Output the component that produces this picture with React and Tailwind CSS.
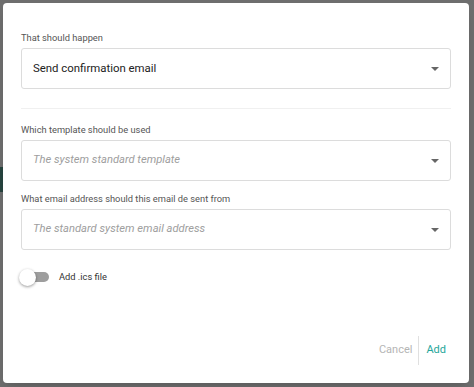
import { useState } from "react";

function Caret() {
  return (
    <svg width="8" height="4" viewBox="0 0 8 4" className="shrink-0">
      <path d="M0 0 L8 0 L4 4 Z" fill="#666" />
    </svg>
  );
}

function SelectBox({ value, placeholder }) {
  return (
    <div className="flex h-[41px] items-center justify-between rounded-[3px] border border-[#dcdcdc] pl-[11px] pr-[11px]">
      {value ? (
        <span className="text-[11.4px] text-[#222]">{value}</span>
      ) : (
        <span className="text-[11.2px] italic text-[#9e9e9e]">{placeholder}</span>
      )}
      <Caret />
    </div>
  );
}

function Field({ label, children }) {
  return (
    <div className="flex flex-col">
      <label className="mb-[4px] text-[9.3px] leading-[13px] text-[#555]">{label}</label>
      {children}
    </div>
  );
}

export default function App() {
  const [ics, setIcs] = useState(false);

  return (
    <div
      className="relative h-[387px] w-[474px] bg-[#6e6e6e] p-[3px] pr-[5px] pb-[4px]"
      style={{ fontFamily: "Roboto, 'Noto Sans', sans-serif" }}
    >
      <div className="absolute left-0 top-[167px] h-[25px] w-[3px] bg-[#27443f]" />
      <div className="relative flex h-full flex-col rounded-[4px] bg-white px-[18px] pt-[28px] shadow-lg">
        <Field label="That should happen">
          <SelectBox value="Send confirmation email" />
        </Field>

        <div className="mt-[19px] mb-[14px] h-px bg-[#f0f0f0]" />

        <Field label="Which template should be used">
          <SelectBox placeholder="The system standard template" />
        </Field>

        <div className="mt-[11px]">
          <Field label="What email address should this email de sent from">
            <SelectBox placeholder="The standard system email address" />
          </Field>
        </div>

        <div className="mt-[18px] -ml-[2px] flex items-center gap-[10px]">
          <button
            onClick={() => setIcs(!ics)}
            className="relative h-[18px] w-[30px]"
          >
            <span className="absolute left-[6px] top-[4px] h-[10px] w-[24px] rounded-full bg-[#9e9e9e]" />
            <span className="absolute left-0 top-[1px] h-[17px] w-[17px] rounded-full bg-white shadow-[0_1px_3px_rgba(0,0,0,0.4)]" />
          </button>
          <span className="text-[9.3px] text-[#333]">Add .ics file</span>
        </div>

        <div className="mt-auto mb-[18px] flex items-center justify-end pr-[5px]">
          <button className="px-[6px] text-[11px] text-[#b5b5b5]">Cancel</button>
          <div className="h-[29px] w-px bg-[#e0e0e0]" />
          <button className="pl-[7px] text-[11px] text-[#26a69a]">Add</button>
        </div>
      </div>
    </div>
  );
}
